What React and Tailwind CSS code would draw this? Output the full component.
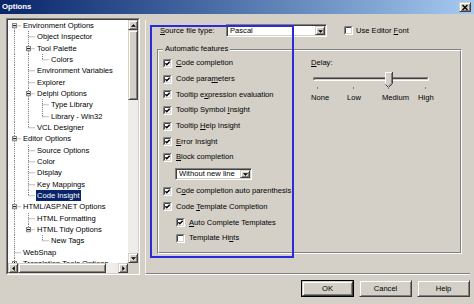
import React from "react";

// Tree data for the options navigator
const TREE = [
  {
    label: "Environment Options",
    children: [
      { label: "Object Inspector" },
      { label: "Tool Palette", children: [{ label: "Colors" }] },
      { label: "Environment Variables" },
      { label: "Explorer" },
      {
        label: "Delphi Options",
        children: [{ label: "Type Library" }, { label: "Library - Win32" }],
      },
      { label: "VCL Designer" },
    ],
  },
  {
    label: "Editor Options",
    children: [
      { label: "Source Options" },
      { label: "Color" },
      { label: "Display" },
      { label: "Key Mappings" },
      { label: "Code Insight", selected: true },
    ],
  },
  {
    label: "HTML/ASP.NET Options",
    children: [
      { label: "HTML Formatting" },
      { label: "HTML Tidy Options", children: [{ label: "New Tags" }] },
    ],
  },
  { label: "WebSnap" },
  { label: "Translation Tools Options", collapsed: true },
];

function flatten(nodes, guides = [], out = []) {
  nodes.forEach((n, i) => {
    const isLast = i === nodes.length - 1;
    out.push({
      label: n.label,
      selected: n.selected,
      guides,
      isLast,
      isFirst: guides.length === 0 && i === 0,
      box: !!n.children || n.collapsed,
      collapsed: n.collapsed,
    });
    if (n.children) flatten(n.children, [...guides, !isLast], out);
  });
  return out;
}

const ROWS = flatten(TREE);

const RAISED =
  "border border-t-[#d4d0c8] border-l-[#d4d0c8] border-r-[#404040] border-b-[#404040] bg-[#d4d0c8] shadow-[inset_1px_1px_#fff,inset_-1px_-1px_#808080]";
const SUNKEN =
  "border border-t-[#808080] border-l-[#808080] border-r-white border-b-white shadow-[inset_1px_1px_#404040,inset_-1px_-1px_#d4d0c8]";

// Label with a mnemonic underline marked by "&"
const Mn = ({ text }) => {
  const i = text.indexOf("&");
  if (i < 0) return text;
  return (
    <>
      {text.slice(0, i)}
      <span className="underline">{text[i + 1]}</span>
      {text.slice(i + 2)}
    </>
  );
};

const Guide = ({ line }) => (
  <svg width="14" height="11.33" viewBox="0 0 14 11" preserveAspectRatio="none" className="shrink-0">
    {line && <line x1="6.5" y1="0" x2="6.5" y2="11" stroke="#808080" strokeDasharray="1 1" />}
  </svg>
);

const Connector = ({ row }) => (
  <svg width="14" height="11.33" viewBox="0 0 14 11" preserveAspectRatio="none" className="shrink-0">
    <line
      x1="6.5"
      y1={row.isFirst ? 5.5 : 0}
      x2="6.5"
      y2={row.isLast ? 5.5 : 11}
      stroke="#808080"
      strokeDasharray="1 1"
    />
    <line x1="6.5" y1="5.5" x2="13" y2="5.5" stroke="#808080" strokeDasharray="1 1" />
    {row.box && (
      <>
        <rect x="4.5" y="3.5" width="4" height="4" fill="#fff" stroke="#808080" />
        <line x1="5" y1="5.5" x2="8" y2="5.5" stroke="#000" />
        {row.collapsed && <line x1="6.5" y1="4" x2="6.5" y2="7" stroke="#000" />}
      </>
    )}
  </svg>
);

const Arrow = ({ dir }) => {
  const pts = {
    up: "2.5,5.5 6.5,5.5 4.5,3.5",
    down: "2.5,3.5 6.5,3.5 4.5,5.5",
    left: "5.5,2.5 5.5,6.5 3.5,4.5",
    right: "3.5,2.5 3.5,6.5 5.5,4.5",
  }[dir];
  return (
    <svg width="8" height="8" viewBox="0 0 8 8">
      <polygon points={pts} fill="#000" stroke="#000" strokeWidth="0.5" />
    </svg>
  );
};

const CheckBox = ({ checked }) => (
  <svg width="9" height="9" viewBox="0 0 9 9" className="shrink-0">
    <rect x="0" y="0" width="9" height="9" fill="#fff" />
    <path d="M0.5 8.5V0.5H8.5" stroke="#808080" fill="none" />
    <path d="M1.5 7.5V1.5H7.5" stroke="#404040" fill="none" />
    <path d="M1.5 7.5H7.5V1.5" stroke="#d4d0c8" fill="none" />
    {checked && (
      <polyline points="2.4,4.2 3.8,5.7 6.7,2.7" stroke="#000" strokeWidth="1.5" fill="none" />
    )}
  </svg>
);

const CheckRow = ({ label, checked = true, indent = false }) => (
  <div className={`flex h-[15.7px] items-center gap-[4px] whitespace-nowrap ${indent ? "pl-[13px]" : ""}`}>
    <CheckBox checked={checked} />
    <span className="leading-[10px]">
      <Mn text={label} />
    </span>
  </div>
);

const Combo = ({ text, className }) => (
  <div className={`flex items-stretch bg-white ${SUNKEN} ${className}`}>
    <span className="flex flex-1 items-center pl-[3px] leading-[10px]">{text}</span>
    <div className={`my-[1px] mr-[1px] flex w-[10px] items-center justify-center ${RAISED}`}>
      <Arrow dir="down" />
    </div>
  </div>
);

const Button = ({ label, isDefault }) => (
  <div className={`h-[17px] w-[53px] ${isDefault ? "border border-black" : ""}`}>
    <div className={`flex h-full items-center justify-center leading-[10px] ${RAISED}`}>{label}</div>
  </div>
);

export default function App() {
  return (
    <div className="relative h-[304px] w-[474px] overflow-hidden bg-[#d4d0c8] font-['Liberation_Sans',Arial,sans-serif] text-[7.6px] text-black">
      {/* Title bar */}
      <div className="flex h-[14px] items-center bg-linear-to-r from-[#0a246a] to-[#a6caf0] pl-[2px] pr-[3px]">
        <span className="text-[7.8px] leading-[10px] font-bold text-white">Options</span>
        <div className={`ml-auto flex h-[10px] w-[12px] items-center justify-center ${RAISED}`}>
          <svg width="8" height="7" viewBox="0 0 8 7">
            <path d="M1.5 1L6.5 6M6.5 1L1.5 6" stroke="#000" strokeWidth="1.4" />
          </svg>
        </div>
      </div>

      <div className="flex pt-[4px]">
        {/* Tree view */}
        <div className="ml-[6px] flex h-[257px] w-[134px] flex-col border border-t-[#808080] border-l-[#808080] border-r-white border-b-white">
          <div className="flex min-h-0 flex-1 flex-col border border-t-[#404040] border-l-[#404040] border-r-[#d4d0c8] border-b-[#d4d0c8] bg-white">
            <div className="flex min-h-0 flex-1">
              <div className="min-w-0 flex-1 overflow-hidden">
                {ROWS.map((r) => (
                  <div key={r.label} className="flex h-[11.33px] items-center whitespace-nowrap">
                    {r.guides.map((g, i) => (
                      <Guide key={i} line={g} />
                    ))}
                    <Connector row={r} />
                    <span
                      className={`px-[1px] leading-[11px] ${r.selected ? "bg-[#0a246a] text-white" : ""}`}
                    >
                      {r.label}
                    </span>
                  </div>
                ))}
              </div>
              <div className="flex w-[10px] flex-col bg-[#eeede9]">
                <div className={`flex h-[10px] items-center justify-center ${RAISED}`}>
                  <Arrow dir="up" />
                </div>
                <div className={`h-[70px] ${RAISED}`} />
                <div className="flex-1" />
                <div className={`flex h-[10px] items-center justify-center ${RAISED}`}>
                  <Arrow dir="down" />
                </div>
              </div>
            </div>
            <div className="flex h-[10px] bg-[#eeede9]">
              <div className={`flex w-[10px] items-center justify-center ${RAISED}`}>
                <Arrow dir="left" />
              </div>
              <div className={`w-[88px] ${RAISED}`} />
              <div className="flex-1" />
              <div className={`flex w-[10px] items-center justify-center ${RAISED}`}>
                <Arrow dir="right" />
              </div>
              <div className="w-[10px] bg-[#d4d0c8]" />
            </div>
          </div>
        </div>

        {/* Code Insight page */}
        <div className="ml-[5px] mt-[2px] flex h-[254px] w-[325px] flex-col border-l border-b border-l-[#f4f3f0] border-b-[#808080] shadow-[0_1px_0_#fff]">
          <div className="mt-[4px] flex h-[13px] items-center pl-[14px]">
            <span className="w-[66px] leading-[10px]">
              <Mn text="&Source file type:" />
            </span>
            <Combo text="Pascal" className="h-[13px] w-[101px]" />
            <div className="ml-[17px] flex items-center gap-[3px]">
              <CheckBox checked={false} />
              <span className="leading-[10px]">
                <Mn text="Use Editor &Font" />
              </span>
            </div>
          </div>

          <div className="ml-[11px] mt-[12px] h-[205px] w-[305px] border border-t-[#808080] border-l-[#808080] border-r-white border-b-white">
            <div className="h-full border border-t-white border-l-white border-r-[#808080] border-b-[#808080]">
              <div className="ml-[4px] -mt-[7px] w-fit bg-[#d4d0c8] px-[2px] leading-[10px]">
                Automatic features
              </div>
              <div className="mt-[1.5px] flex pl-[4px]">
                <div className="w-[148px]">
                  <CheckRow label="&Code completion" />
                  <CheckRow label="Code para&meters" />
                  <CheckRow label="Tooltip e&xpression evaluation" />
                  <CheckRow label="Tooltip Symbol &Insight" />
                  <CheckRow label="Tooltip &Help Insight" />
                  <CheckRow label="&Error Insight" />
                  <CheckRow label="&Block completion" />
                  <div className="flex h-[18px] items-center pl-[12px]">
                    <Combo text="Without new line" className="h-[12px] w-[77px]" />
                  </div>
                  <CheckRow label="C&ode completion auto parenthesis" />
                  <CheckRow label="Code &Template Completion" />
                  <CheckRow label="&Auto Complete Templates" indent />
                  <CheckRow label="Template Hi&nts" checked={false} indent />
                </div>
                <div className="flex flex-col">
                  <span className="mt-[1px] leading-[11px]">
                    <Mn text="&Delay:" />
                  </span>
                  <svg width="120" height="19" viewBox="0 0 120 19" className="mt-[3.5px]">
                    <path d="M2.5 9.5V6.5H117.5" stroke="#808080" fill="none" />
                    <path d="M3.5 8.5V7.5H116.5" stroke="#404040" fill="none" />
                    <path d="M2.5 9.5H117.5V6.5" stroke="#fff" fill="none" />
                    <polygon points="74,1 81,1 81,12 77.5,15.5 74,12" fill="#d4d0c8" />
                    <path d="M74.5 12.5V1.5H80.5" stroke="#fff" fill="none" />
                    <path d="M81.5 1V12.5L77.5 16.5L74.5 13.5" stroke="#404040" fill="none" />
                    <path d="M80.5 2V12L77.5 15" stroke="#808080" fill="none" />
                    <rect x="6" y="16" width="1" height="2" fill="#808080" />
                    <rect x="42" y="16" width="1" height="2" fill="#808080" />
                    <rect x="77" y="16" width="1" height="2" fill="#808080" />
                    <rect x="114" y="16" width="1" height="2" fill="#808080" />
                  </svg>
                  <div className="mt-[3px] flex leading-[10px] whitespace-nowrap">
                    <span className="w-[36px]">None</span>
                    <span className="w-[35px]">Low</span>
                    <span className="w-[36px]">Medium</span>
                    <span>High</span>
                  </div>
                </div>
              </div>
            </div>
          </div>
        </div>
      </div>

      {/* Dialog buttons */}
      <div className="mt-[5px] flex justify-end gap-[5px] pr-[4px]">
        <Button label="OK" isDefault />
        <Button label="Cancel" />
        <Button label="Help" />
      </div>

      {/* Blue highlight annotation over the features list */}
      <div className="pointer-events-none absolute left-[150px] top-[25px] h-[233px] w-[144px] border-2 border-[#2b2bd9]" />
    </div>
  );
}
